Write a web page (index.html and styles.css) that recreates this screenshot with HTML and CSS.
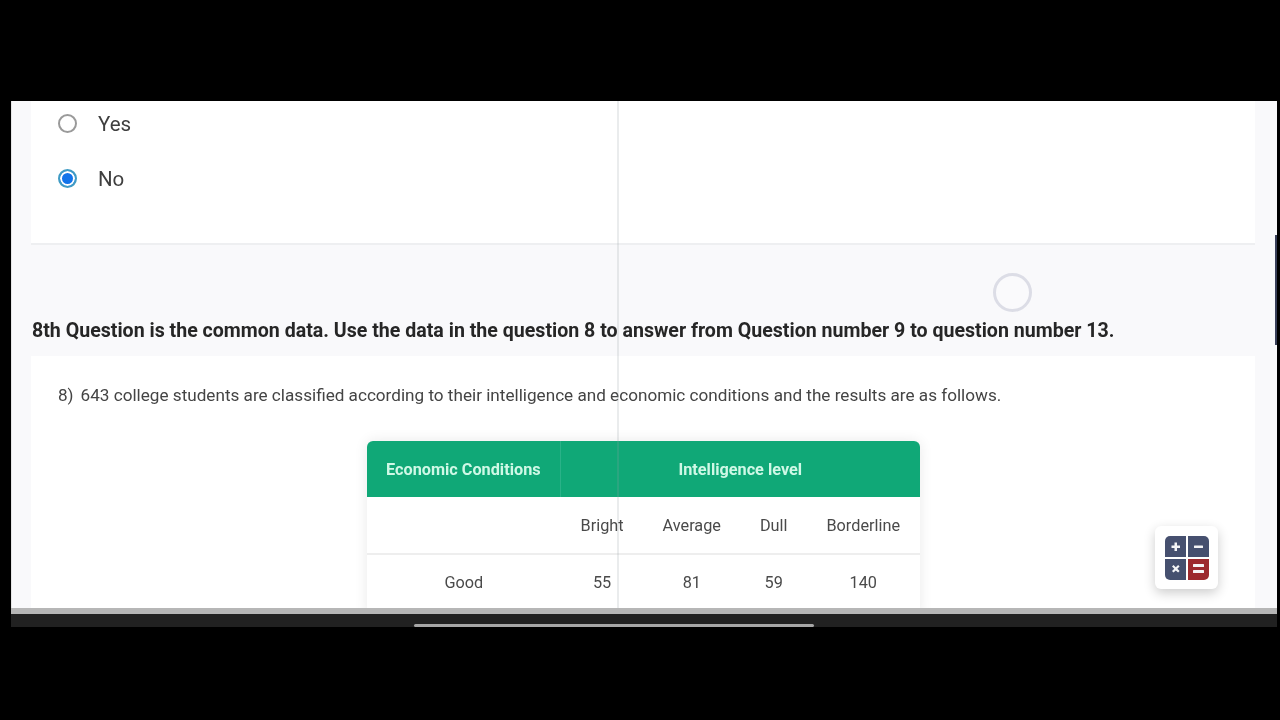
FILE: index.html
```html
<!DOCTYPE html>
<html lang="en">
<head>
<meta charset="utf-8">
<title>Test</title>
<link rel="stylesheet" href="styles.css">
</head>
<body>
<div class="frame">
  <div class="screen">
    <div class="page">
      <section class="card options">
        <label class="option"><span class="radio"></span><span>Yes</span></label>
        <label class="option"><span class="radio checked"></span><span>No</span></label>
      </section>
      <h2 class="common">8th Question is the common data. Use the data in the question 8 to answer from Question number 9 to question number 13.</h2>
      <section class="card question">
        <p class="qtext"><span class="qnum">8)</span>643 college students are classified according to their intelligence and economic conditions and the results are as follows.</p>
        <table class="data">
          <thead>
            <tr><th>Economic Conditions</th><th colspan="4">Intelligence level</th></tr>
          </thead>
          <tbody>
            <tr><td></td><td>Bright</td><td>Average</td><td>Dull</td><td>Borderline</td></tr>
            <tr><td>Good</td><td>55</td><td>81</td><td>59</td><td>140</td></tr>
          </tbody>
        </table>
      </section>
    </div>
    <div class="split"></div>
    <div class="ring"></div>
    <div class="scrollthumb"></div>
    <div class="calc">
      <svg width="44" height="44" viewBox="0 0 44 44" aria-hidden="true">
        <path class="key" d="M5 0h16v21H0V5a5 5 0 0 1 5-5z"/>
        <path class="key" d="M23 0h16a5 5 0 0 1 5 5v16H23z"/>
        <path class="key" d="M0 23h21v21H5a5 5 0 0 1-5-5z"/>
        <path class="key-red" d="M23 23h21v16a5 5 0 0 1-5 5H23z"/>
        <path class="mark" d="M9.500 6.500h2.500v3h3V12h-3v3H9.500v-3h-3V9.500h3z"/>
        <rect class="mark" x="29" y="9.500" width="9" height="2.500" rx="0.500"/>
        <path class="mark" d="M8.500 29l2.300 2.200L13.100 29l1.500 1.500-2.300 2.300 2.300 2.300-1.500 1.500-2.300-2.200-2.300 2.200L7 35.100l2.300-2.300L7 30.500z"/>
        <rect class="mark" x="28" y="28" width="11" height="3" rx="0.500"/>
        <rect class="mark" x="28" y="34" width="11" height="3" rx="0.500"/>
      </svg>
    </div>
  </div>
  <div class="band"></div>
  <div class="navbar"><div class="handle"></div></div>
</div>
</body>
</html>
```

FILE: styles.css
```css
* { box-sizing: border-box; }
html, body { margin: 0; height: 100%; background: #000; }
body { font-family: Roboto, "Liberation Sans", sans-serif; color: #333; overflow: hidden; }

.frame { width: 1266px; margin: 0 0 0 11px; padding-top: 101px; filter: blur(0.4px); }
.screen { position: relative; height: 507px; overflow: hidden; background: #f9f9fb; border-left: 1px solid #e6e6e6; }
.page { padding: 0 22px 0 19px; }

.card { background: #fff; }
.options { display: flow-root; height: 144px; padding: 0 26.500px; border-bottom: 2px solid #eeeff1; }
.option { display: flex; align-items: center; gap: 21.500px; height: 55px; font-size: 20.500px; color: #3f3f3f; }
.option:first-child { margin-top: -5px; }
.radio { width: 19px; height: 19px; flex: none; border-radius: 50%; border: 2px solid #9a9a9a; background: #fff; }
.radio.checked { border: 2px solid #3f9bc4; background: #1273ea; box-shadow: inset 0 0 0 2px #fff; }

.common { margin: 0; padding: 74px 0 0 1px; height: 111px; font-size: 19.590px; line-height: 24px; font-weight: 700; color: #262626; white-space: nowrap; }

.question { height: 260px; padding: 28px 0 0; }
.qtext { margin: 0 0 33px 27px; font-size: 17.140px; line-height: 23px; padding-bottom: 1px; color: #444; display: flex; }
.qnum { margin-right: 7px; }

.data { margin: 0 auto; border-collapse: separate; border-spacing: 0; font-size: 16.250px; color: #4a4a4a; background: #fff; box-shadow: 0 0 14px rgba(0, 0, 0, .09); border-radius: 6px 6px 0 0; }
.data th { height: 56px; padding: 0 19.500px; background: #10a877; color: #cff8e6; font-weight: 700; text-align: center; }
.data th:first-child { border-radius: 6px 0 0 0; border-right: 1px solid #2ab288; }
.data th:last-child { border-radius: 0 6px 0 0; }
.data td { height: 60px; padding: 0 19.500px 6px; text-align: center; }
.data tbody tr:first-child td { height: 58px; padding-bottom: 0; border-bottom: 2px solid #eeeeee; }

.split { position: absolute; left: 605px; top: 0; width: 2px; height: 100%; background: rgba(150, 160, 165, .2); }
.ring { position: absolute; left: 981px; top: 172px; width: 39px; height: 39px; border-radius: 50%; border: 3px solid #dcdde6; background: #fafafc; }
.scrollthumb { position: absolute; right: 0; top: 134px; width: 2px; height: 110px; background: #39405a; }

.calc { position: absolute; left: 1143px; top: 425px; width: 63px; height: 63px; display: flex; align-items: center; justify-content: center; background: #fff; border-radius: 6px; box-shadow: 0 4px 12px rgba(0, 0, 0, .2); }
.key { fill: #46506f; }
.key-red { fill: #9c2a2f; }
.mark { fill: #f4f4f6; }

.band { height: 6px; background: #b6b6b6; }
.navbar { height: 13px; background: #212121; position: relative; }
.handle { position: absolute; left: 403px; bottom: 0; width: 400px; height: 3px; border-radius: 2px; background: #a6a6a6; }
```
